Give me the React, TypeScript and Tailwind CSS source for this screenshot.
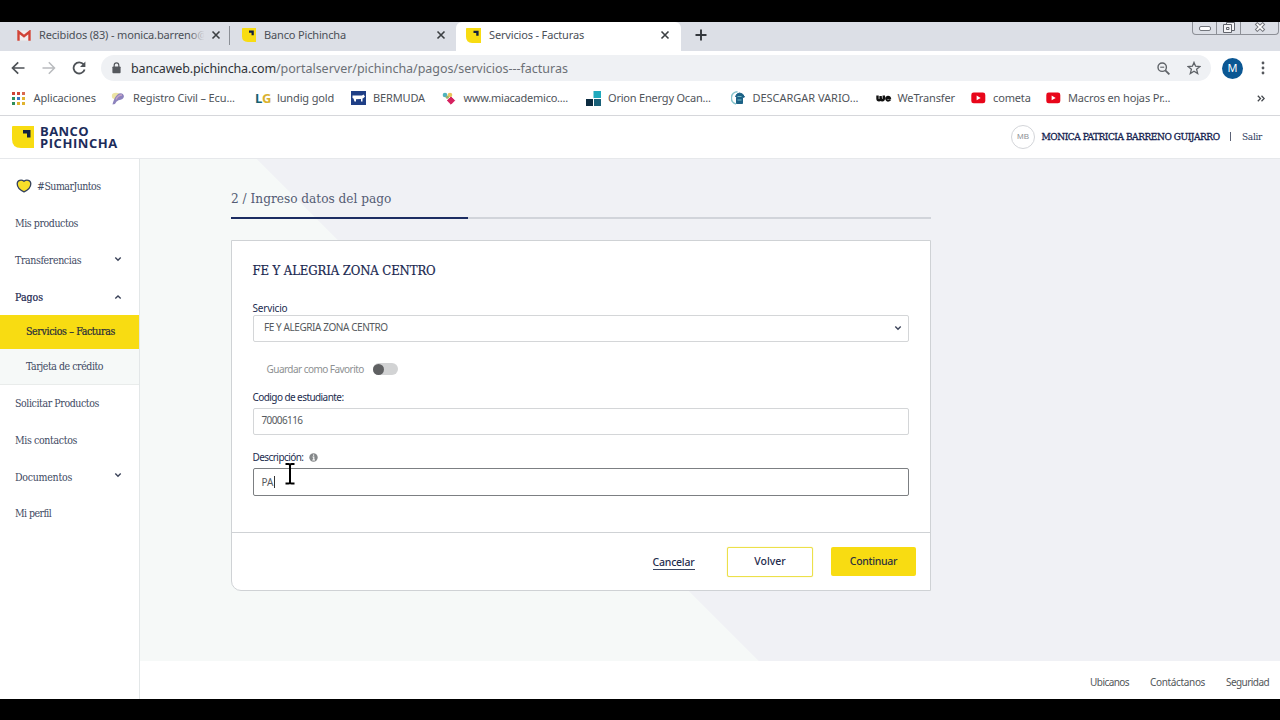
import type { ReactNode } from 'react';

function X({ className = '' }: { className?: string }) {
  return (
    <svg viewBox="0 0 10 10" className={`h-[10px] w-[10px] shrink-0 ${className}`}>
      <path d="M1.5 1.5 8.5 8.5M8.5 1.5 1.5 8.5" stroke="#3c4043" strokeWidth="1.6" fill="none" />
    </svg>
  );
}

function BankMark({ className }: { className: string }) {
  return (
    <svg viewBox="0 0 22 22" className={`shrink-0 ${className}`}>
      <path d="M1 0H22V22H9Q0 22 0 13V1Q0 0 1 0Z" fill="#f8dc12" />
      <path d="M11 4H18.5V11.5H15V7.5H11Z" fill="#14213f" />
    </svg>
  );
}

function Chevron({ up = false, className = '' }: { up?: boolean; className?: string }) {
  return (
    <svg viewBox="0 0 8 6" className={`h-[6px] w-[8px] shrink-0 ${className}`}>
      <path d={up ? 'M1.3 4.5 4 2 6.7 4.5' : 'M1.3 1.5 4 4.2 6.7 1.5'} stroke="#3a4258" strokeWidth="1.4" fill="none" />
    </svg>
  );
}

function YouTube() {
  return (
    <svg viewBox="0 0 15 12" className="h-[12px] w-[15px] shrink-0">
      <rect x="0.3" y="0.5" width="14" height="10.8" rx="2.4" fill="#e8061a" />
      <path d="M5.6 3.5 9.7 5.9 5.6 8.3Z" fill="#fff" />
    </svg>
  );
}

function Bookmark({ icon, label, className }: { icon: ReactNode; label: string; className: string }) {
  return (
    <div className={`flex shrink-0 items-center ${className}`}>
      <span className="flex w-[22px] shrink-0 items-center">{icon}</span>
      <span>{label}</span>
    </div>
  );
}

function TabStrip() {
  return (
    <div className="flex h-[29px] shrink-0 bg-[#dcdfe6] text-[11px] tracking-[-0.16px] text-[#4b4f57]">
      <div className="flex h-[26px] w-[230px] items-center">
        <svg viewBox="0 0 14 11" className="ml-[17px] h-[11px] w-[14px] shrink-0">
          <path d="M0.5 0.5H13.5V10.5H0.5Z" fill="#f1eded" />
          <path d="M1.5 10.8V1.8L7 6.3 12.5 1.8V10.8" fill="none" stroke="#d14437" strokeWidth="2.4" />
        </svg>
        <span className="relative ml-[8px] w-[172px] whitespace-nowrap">
          Recibidos (83) - monica.barreno@
          <span className="absolute inset-y-0 right-0 w-[22px] bg-linear-to-r from-[#dcdfe600] to-[#dcdfe6] to-70%" />
        </span>
        <X />
        <span className="ml-auto h-[19px] w-px bg-[#8b8f96]" />
      </div>
      <div className="flex h-[29px] w-[226px] items-center rounded-br-md pb-[3px]">
        <BankMark className="ml-[12px] h-[14px] w-[14px]" />
        <span className="ml-[8px] flex-1">Banco Pichincha</span>
        <X className="mr-[10px]" />
      </div>
      <div className="flex h-[29px] w-[225px] items-center rounded-t-md bg-white pb-[3px]">
        <BankMark className="ml-[10px] h-[15px] w-[15px]" />
        <span className="ml-[8px] flex-1">Servicios - Facturas</span>
        <X className="mr-[11px]" />
      </div>
      <svg viewBox="0 0 12 12" className="mt-[7px] ml-[14px] h-[12px] w-[12px]">
        <path d="M6 0.5V11.5M0.5 6H11.5" stroke="#33373c" strokeWidth="1.9" />
      </svg>
      <div className="mr-px ml-auto flex h-[13px] w-[87px] rounded-b-[4px] border border-t-0 border-[#8d9097]">
        <span className="flex w-[24px] items-center justify-center border-r border-[#8d9097]">
          <span className="h-[5px] w-[12px] rounded-[2px] border border-[#73767d] bg-white" />
        </span>
        <span className="flex w-[24px] items-center justify-center border-r border-[#8d9097]">
          <svg viewBox="0 0 12 12" className="h-[12px] w-[12px]" fill="#f5f5f7" stroke="#62656c">
            <path d="M3.5 0.5H11.5V8.5H3.5Z" />
            <path d="M0.5 2.5H8.5V10.5H0.5Z" />
            <path d="M3.5 5.5H6V7.5H3.5Z" />
          </svg>
        </span>
        <span className="flex flex-1 items-center justify-center pb-[2px]">
          <svg viewBox="0 0 12 10" className="h-[10px] w-[12px]">
            <path d="M2 1.2 10 8.8M10 1.2 2 8.8" stroke="#73767d" strokeWidth="3.6" />
            <path d="M2.7 1.8 9.3 8.2M9.3 1.8 2.7 8.2" stroke="#fff" strokeWidth="1.7" />
          </svg>
        </span>
      </div>
    </div>
  );
}

function AddressBar() {
  return (
    <div className="flex h-[33px] shrink-0 items-center bg-white pt-px">
      <svg viewBox="0 0 14 14" className="ml-[11px] h-[14px] w-[14px]" fill="none" stroke="#4e5257" strokeWidth="1.7">
        <path d="M13.5 7H1.8M7.2 1.3 1.5 7 7.2 12.7" />
      </svg>
      <svg viewBox="0 0 14 14" className="ml-[17px] h-[14px] w-[14px]" fill="none" stroke="#b9bbbe" strokeWidth="1.5">
        <path d="M0.5 7H12.2M6.8 1.3 12.5 7 6.8 12.7" />
      </svg>
      <svg viewBox="0 0 14 14" className="ml-[16px] h-[14px] w-[14px]" fill="none" stroke="#4e5257" strokeWidth="1.8">
        <path d="M11.6 3.4A5.6 5.6 0 1 0 12.6 8.4" />
        <path d="M13.4 0.6V6H8Z" fill="#4e5257" stroke="none" />
      </svg>
      <div className="ml-[15px] flex h-[26px] w-[1110px] items-center rounded-full bg-[#eff1f4] text-[12.5px] whitespace-nowrap">
        <svg viewBox="0 0 9 12" className="mb-px ml-[11px] h-[12px] w-[9px]">
          <rect x="0.4" y="4.4" width="8.2" height="6.8" rx="0.9" fill="#55585d" />
          <path d="M2.2 5V3.2a2.3 2.3 0 0 1 4.6 0V5" fill="none" stroke="#55585d" strokeWidth="1.2" />
        </svg>
        <span className="mt-[2px] ml-[10px] tracking-[-0.15px] text-[#2f3338]">bancaweb.pichincha.com</span>
        <span className="mt-[2px] tracking-[-0.02px] text-[#6c7076]">/portalserver/pichincha/pagos/servicios---facturas</span>
        <svg viewBox="0 0 13 13" className="ml-auto h-[13px] w-[13px]" fill="none" stroke="#5f6368" strokeWidth="1.4">
          <circle cx="5.2" cy="5.2" r="4.2" />
          <path d="M8.3 8.3 12.4 12.4" strokeWidth="1.8" />
          <path d="M3.2 5.2H7.2" strokeWidth="1.1" />
        </svg>
        <svg viewBox="0 0 14 14" className="mr-[10px] ml-[17px] h-[14px] w-[14px]" fill="none" stroke="#5f6368" strokeWidth="1.3">
          <path d="M7 1.4 8.6 5.2 12.9 5.6 9.6 8.3 10.7 12.5 7 10.2 3.3 12.5 4.4 8.3 1.1 5.6 5.4 5.2Z" />
        </svg>
      </div>
      <span className="ml-[11px] flex h-[21px] w-[21px] items-center justify-center rounded-full bg-[#0b5793] text-[11px] text-white">M</span>
      <svg viewBox="0 0 4 14" className="ml-[18px] h-[14px] w-[4px]" fill="#55585d">
        <circle cx="2" cy="2" r="1.4" />
        <circle cx="2" cy="7" r="1.4" />
        <circle cx="2" cy="12" r="1.4" />
      </svg>
    </div>
  );
}

const appDots = ['#cf4436', '#cf4436', '#d9694f', '#2f8f5b', '#3a75c4', '#e0b32f', '#2f8f5b', '#e0b32f', '#e0b32f'];

function BookmarksBar() {
  return (
    <div className="flex h-[32px] shrink-0 items-center border-b border-[#d6d7db] bg-white pb-[3px] pl-[11.5px] text-[11px] tracking-[-0.14px] whitespace-nowrap text-[#50545a]">
      <Bookmark
        className="w-[99.5px]"
        label="Aplicaciones"
        icon={
          <span className="grid grid-cols-3 gap-[2px]">
            {appDots.map((c, i) => (
              <span key={i} className="h-[3px] w-[3px]" style={{ backgroundColor: c }} />
            ))}
          </span>
        }
      />
      <Bookmark
        className="w-[144px]"
        label="Registro Civil – Ecu..."
        icon={
          <svg viewBox="0 0 14 13" className="h-[13px] w-[14px]">
            <ellipse cx="5" cy="4" rx="4.2" ry="3.2" fill="#ece4a4" />
            <path d="M1.5 12.5C2.5 9 4 4 8 1.6Q12 0 13 4 12.6 8 7.5 8.2 5 9.5 4 12Z" fill="#8d83bd" />
            <path d="M5 7.5Q7 3 11 3" stroke="#c4a3c9" fill="none" strokeWidth="1.3" />
          </svg>
        }
      />
      <Bookmark
        className="w-[96px]"
        label="lundig gold"
        icon={
          <span className="font-['Open_Sans'] text-[13px] leading-none font-bold tracking-[-0.3px] text-[#176172]">
            L<span className="text-[#d9b12f]">G</span>
          </span>
        }
      />
      <Bookmark
        className="w-[90.5px]"
        label="BERMUDA"
        icon={
          <svg viewBox="0 0 15 14" className="h-[14px] w-[15px]">
            <rect width="15" height="14" fill="#1f3f86" />
            <path d="M1.5 4.5H11L12.5 3.5 14 5.5 12.5 7 11.5 7.5V10.5H10V8L5 8.2V10.5H3.5L2.5 7.5 1.5 7Z" fill="#fff" />
          </svg>
        }
      />
      <Bookmark
        className="w-[144.5px] tracking-[-0.24px]"
        label="www.miacademico...."
        icon={
          <svg viewBox="0 0 14 13" className="h-[13px] w-[14px]">
            <circle cx="3" cy="3" r="2.3" fill="#4fb4bd" />
            <circle cx="8" cy="3" r="2.3" fill="#e7c55d" />
            <circle cx="5.3" cy="5.2" r="1.6" fill="#9ab16b" />
            <path d="M9 5 12.700 8.5 9 12.2 5.300 8.5Z" fill="#d6215f" stroke="#d6215f" strokeLinejoin="round" />
          </svg>
        }
      />
      <Bookmark
        className="w-[144.5px] tracking-[-0.2px]"
        label="Orion Energy Ocan..."
        icon={
          <svg viewBox="0 0 15 15" className="h-[15px] w-[15px]">
            <path d="M7.5 0H15V7H7.5Z" fill="#20a9bd" />
            <path d="M0 8H7V15H0Z" fill="#0c2b40" />
            <path d="M8 8H15V15H8Z" fill="#196078" />
          </svg>
        }
      />
      <Bookmark
        className="w-[145px] tracking-[-0.03px]"
        label="DESCARGAR VARIO..."
        icon={
          <svg viewBox="0 0 14 14" className="h-[14px] w-[14px]">
            <path d="M6.5 0.8A6.2 6.2 0 0 0 5 13" stroke="#86c4cc" strokeWidth="1.6" fill="none" />
            <path d="M4.5 5.5 6 3 8.5 2 11.5 3 13.5 6 11.5 6.5V12.5H5.5V6.5Z" fill="#1c6286" stroke="#1c6286" strokeLinejoin="round" />
            <path d="M6.5 5.5H10.5M6.5 9H10.5" stroke="#8fd0d6" strokeWidth="0.8" />
          </svg>
        }
      />
      <Bookmark
        className="w-[95.5px]"
        label="WeTransfer"
        icon={
          <svg viewBox="0 0 16 9" className="h-[9px] w-[16px]" fill="none" stroke="#111">
            <path d="M1.5 1.5V4.5Q1.5 6.3 3 6.3T4.6 4.5V2Q4.6 6.3 6.3 6.3T7.8 4.5V1.5" strokeWidth="2.4" />
            <path d="M10.5 4.4H14.2A2.1 2.1 0 1 0 12.5 6.7L14.5 6" strokeWidth="1.8" />
          </svg>
        }
      />
      <Bookmark className="w-[75px]" label="cometa" icon={<YouTube />} />
      <Bookmark className="w-[130px]" label="Macros en hojas Pr..." icon={<YouTube />} />
      <svg viewBox="0 0 8 7" className="mr-[15px] ml-auto h-[7px] w-[8px]" fill="none" stroke="#44484d" strokeWidth="1.3">
        <path d="M0.8 0.7 3.5 3.5 0.8 6.3M4.5 0.7 7.2 3.5 4.5 6.3" />
      </svg>
    </div>
  );
}

function SiteHeader() {
  return (
    <header className="flex h-[43px] shrink-0 items-center border-b border-[#e6e8eb] bg-white">
      <BankMark className="ml-[12px] h-[22px] w-[22px]" />
      <div className="ml-[6px] font-['Open_Sans'] text-[13px] leading-[12px] font-bold text-[#1c2c5b]">
        <div className="tracking-[0.45px]">BANCO</div>
        <div className="tracking-[0.56px]">PICHINCHA</div>
      </div>
      <span className="ml-auto flex h-[24px] w-[24px] items-center justify-center rounded-full border border-[#d3d5d9] font-['Liberation_Sans'] text-[8px] text-[#8d9096]">MB</span>
      <span className="mb-px ml-[6.5px] w-[178px] font-['DejaVu_Serif_Condensed','DejaVu_Serif',serif] text-[10px] tracking-[-0.44px] whitespace-nowrap text-[#14224f] [-webkit-text-stroke:0.3px_#14224f]">
        MONICA PATRICIA BARRENO GUIJARRO
      </span>
      <span className="mb-px ml-[10.5px] h-[9px] w-px bg-[#5b6275]" />
      <span className="mr-[18px] mb-px ml-[11px] font-['DejaVu_Serif_Condensed','DejaVu_Serif',serif] text-[10px] tracking-[-0.32px] text-[#2d3a5e]">Salir</span>
    </header>
  );
}

function NavItem({ label, className = '', open }: { label: string; className?: string; open?: boolean }) {
  return (
    <div className={`flex h-[36.7px] items-center justify-between pr-[17px] pl-[15px] ${className}`}>
      <span className="pt-[2px]">{label}</span>
      {open !== undefined && <Chevron up={open} className={open ? 'mt-px' : 'mb-[2px]'} />}
    </div>
  );
}

function Sidebar() {
  return (
    <nav className="flex w-[140px] shrink-0 flex-col border-r border-[#e3e7e8] bg-white pt-[9px] font-['DejaVu_Serif_Condensed','DejaVu_Serif',serif] text-[10.5px] whitespace-nowrap text-[#414a63]">
      <div className="flex h-[36.7px] items-center pl-[16px]">
        <svg viewBox="0 0 16 14" className="h-[14px] w-[16px]">
          <path d="M8 12.8C5 11.5 1.2 8.5 1.2 4.8 1.2 1 5.5 0.2 8 2.2 10.5 0.2 14.8 1 14.8 4.8 14.8 8.5 11 11.5 8 12.8Z" fill="#f8df2a" stroke="#33405a" strokeWidth="1.3" />
        </svg>
        <span className="ml-[5px] pt-[2px] tracking-[-0.53px]">#SumarJuntos</span>
      </div>
      <NavItem label="Mis productos" className="tracking-[-0.43px]" />
      <NavItem label="Transferencias" open={false} className="tracking-[-0.38px]" />
      <NavItem label="Pagos" open className="text-[#1c2850] [-webkit-text-stroke:0.2px_#1c2850]" />
      <div className="flex h-[34px] items-center bg-[#f8dc12] pt-px pl-[26px] tracking-[-0.36px] text-[#272d3b] [-webkit-text-stroke:0.2px_#272d3b]">Servicios – Facturas</div>
      <div className="flex h-[36px] items-center border-b border-[#e9eceb] bg-[#f6f9f8] pt-[2px] pl-[26px] tracking-[-0.45px]">Tarjeta de crédito</div>
      <NavItem label="Solicitar Productos" className="tracking-[-0.41px]" />
      <NavItem label="Mis contactos" className="tracking-[-0.36px]" />
      <NavItem label="Documentos" open={false} className="tracking-[-0.26px]" />
      <NavItem label="Mi perfil" className="tracking-[-0.57px]" />
    </nav>
  );
}

function PaymentCard() {
  return (
    <section className="relative mt-[21px] flex h-[351px] w-[700px] flex-col rounded-bl-[10px] border border-[#cfd2d5] bg-white">
      <div className="flex flex-1 flex-col px-[20.5px] text-[10px] text-[#222c4f]">
        <h2 className="mt-[21px] h-[18px] font-['DejaVu_Serif_Condensed','DejaVu_Serif',serif] text-[13px] leading-[18px] tracking-[-0.1px] text-[#1a2850] [-webkit-text-stroke:0.2px_#1a2850]">
          FE Y ALEGRIA ZONA CENTRO
        </h2>
        <label className="mt-[21px] h-[14px] leading-[14px] tracking-[-0.17px]">Servicio</label>
        <div className="flex h-[27px] w-[656px] items-center justify-between rounded-[2px] border border-[#d4d6d8] pr-[6px] pb-[3px] pl-[10.5px] tracking-[-0.42px] text-[#565a5e]">
          FE Y ALEGRIA ZONA CENTRO
          <Chevron className="mt-[2px]" />
        </div>
        <div className="mt-[20px] flex h-[14px] items-center pl-[14px] tracking-[-0.54px] text-[#8e9193]">
          <span className="w-[98px]">Guardar como Favorito</span>
          <span className="ml-[8px] flex h-[12px] w-[25px] items-center rounded-full bg-[#d2d3d4]">
            <span className="h-[11px] w-[11px] rounded-full bg-[#5f6062]" />
          </span>
        </div>
        <label className="mt-[14px] h-[14px] leading-[14px] tracking-[-0.57px]">Codigo de estudiante:</label>
        <div className="mt-[4px] flex h-[27px] w-[656px] items-center rounded-[2px] border border-[#d4d6d8] pb-[2px] pl-[8px] tracking-[-0.6px] text-[#565a5e]">70006116</div>
        <div className="mt-[15px] flex h-[15px] items-center leading-[15px]">
          <label className="w-[51px] tracking-[-0.56px]">Descripción:</label>
          <svg viewBox="0 0 9 9" className="ml-[5px] h-[9px] w-[9px]">
            <circle cx="4.5" cy="4.5" r="4.2" fill="#85888a" />
            <path d="M4.6 1.5V2.8M3.5 4H4.8V7M3.3 7H6" stroke="#fff" strokeWidth="1.1" fill="none" />
          </svg>
        </div>
        <div className="mt-[3px] flex h-[28px] w-[656px] items-center rounded-[2px] border border-[#7c7f82] pl-[8px] tracking-[-0.1px] text-[#565a5e]">
          PA
          <span className="ml-[0.5px] h-[12px] w-px bg-[#333]" />
        </div>
      </div>
      <div className="flex h-[58px] shrink-0 items-center justify-end border-t border-[#cfd2d5] pr-[14px] text-[10.5px] font-medium text-[#1f2b4d]">
        <a className="mt-px mr-[32.5px] border-b border-[#3a4562] leading-[14px] tracking-[-0.22px]">Cancelar</a>
        <button className="mr-[18px] h-[30px] w-[86px] rounded-[2px] border border-[#ece04a] bg-white shadow-[0_0_1px_#ece04a]">Volver</button>
        <button className="h-[29px] w-[85px] rounded-[2px] bg-[#f8dc12] tracking-[-0.3px] text-[#2c3040]">Continuar</button>
      </div>
      <svg viewBox="0 0 12 24" className="absolute top-[221px] left-[52px] h-[24px] w-[12px]" fill="none" stroke="#000" strokeWidth="2">
        <path d="M1.5 2H4.5Q6 2 6 3.5 6 2 7.5 2H10.5M6 3V20.5M1.5 21.5H4.5Q6 21.5 6 20 6 21.5 7.5 21.5H10.5" />
      </svg>
    </section>
  );
}

export default function App() {
  return (
    <div className="flex h-[720px] w-[1280px] flex-col overflow-hidden bg-black pt-[22px] pb-[21px] font-['Noto_Sans',sans-serif]">
      <TabStrip />
      <AddressBar />
      <BookmarksBar />
      <SiteHeader />
      <div className="flex min-h-0 flex-1 bg-white">
        <Sidebar />
        <div className="flex flex-1 flex-col">
          <main className="flex h-[502px] flex-col bg-[linear-gradient(45deg,#f6f9f8_437px,#f0f1f5_438px)] pl-[91px]">
            <h1 className="mt-[29px] h-[20px] font-['DejaVu_Serif_Condensed','DejaVu_Serif',serif] text-[13.5px] leading-[20px] text-[#545c74]">
              2 / Ingreso datos del pago
            </h1>
            <div className="mt-[9px] h-[2px] w-[700px] bg-[#d1d4da]">
              <div className="h-[2px] w-[237px] bg-[#1c2d62]" />
            </div>
            <PaymentCard />
          </main>
          <footer className="flex flex-1 items-center justify-end gap-[21px] pt-[5px] pr-[11px] text-[10px] text-[#53575a]">
            <span className="tracking-[-0.56px]">Ubicanos</span>
            <span className="tracking-[-0.35px]">Contáctanos</span>
            <span className="tracking-[-0.57px]">Seguridad</span>
          </footer>
        </div>
      </div>
    </div>
  );
}
